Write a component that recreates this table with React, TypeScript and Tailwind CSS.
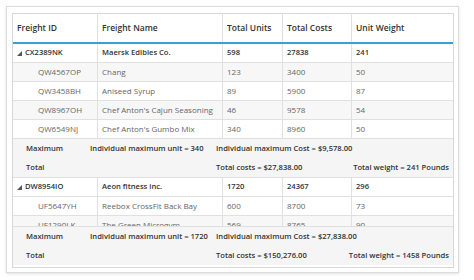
const cols = "grid grid-cols-[85px_125px_60px_69px_101px]";
const cell = "border-r border-[#e0e0e0] pl-[4px] flex items-center whitespace-nowrap overflow-hidden";
const lastCell = "pl-[4px] flex items-center whitespace-nowrap";

type Item = { id: string; name: string; units: number; costs: number; weight: number; alt?: boolean };

const groups = [
  {
    id: "CX2389NK",
    name: "Maersk Edibles Co.",
    units: 598,
    costs: 27838,
    weight: 241,
    items: [
      { id: "QW4567OP", name: "Chang", units: 123, costs: 3400, weight: 50, alt: true },
      { id: "QW3458BH", name: "Aniseed Syrup", units: 89, costs: 5900, weight: 87 },
      { id: "QW8967OH", name: "Chef Anton's Cajun Seasoning", units: 46, costs: 9578, weight: 54, alt: true },
      { id: "QW6549NJ", name: "Chef Anton's Gumbo Mix", units: 340, costs: 8960, weight: 50 },
    ] as Item[],
    summary: true,
  },
  {
    id: "DW8954IO",
    name: "Aeon fitness inc.",
    units: 1720,
    costs: 24367,
    weight: 296,
    items: [
      { id: "UF5647YH", name: "Reebox CrossFit Back Bay", units: 600, costs: 8700, weight: 73 },
      { id: "UF1290LK", name: "The Green Microgym", units: 569, costs: 8765, weight: 90, alt: true },
    ] as Item[],
    summary: false,
  },
];

function Triangle() {
  return (
    <svg width="5" height="5" viewBox="0 0 5 5" className="mr-[3px] shrink-0">
      <polygon points="5,0 5,5 0,5" fill="#555" />
    </svg>
  );
}

function SummaryRows({ max, maxCost, total, weight }: { max: string; maxCost: string; total: string; weight: string }) {
  return (
    <div className="bg-[#f5f5f5] text-[7.6px] font-semibold text-[#333] whitespace-nowrap">
      <div className="h-[19px] flex items-center">
        <span className="w-[77px] shrink-0 pl-[13px]">Maximum</span>
        <span className="w-[126px] shrink-0">{max}</span>
        <span>{maxCost}</span>
      </div>
      <div className="h-[19px] flex items-center">
        <span className="w-[203px] shrink-0 pl-[13px]">Total</span>
        <span className="flex-1">{total}</span>
        <span className="pr-[4px]">{weight}</span>
      </div>
    </div>
  );
}

export default function App() {
  return (
    <div className="w-[474px] h-[280px] bg-white pt-[6px] pl-[6px] font-['Open_Sans',sans-serif] text-[8px]">
      <div className="w-[453px] h-[267px] border border-[#dcdcdc] shadow-[0_1px_3px_rgba(0,0,0,0.12)] pt-[6px] pl-[5px]">
        <div className="w-[442px] h-[255px] border border-[#d8d8d8] flex flex-col">
          {/* header */}
          <div className={`${cols} h-[30px] text-[8.5px] font-semibold text-[#333] border-b-2 border-[#3c9fd1]`}>
            <div className={cell}>Freight ID</div>
            <div className={cell}>Freight Name</div>
            <div className={cell}>Total Units</div>
            <div className={cell}>Total Costs</div>
            <div className={lastCell}>Unit Weight</div>
          </div>

          {/* content */}
          <div className="h-[182px] overflow-hidden">
            {groups.map((g) => (
              <div key={g.id}>
                <div className={`${cols} h-[19px] border-b border-[#e0e0e0] text-[7.6px] font-semibold text-[#333]`}>
                  <div className={`${cell} pl-[3px]`}>
                    <Triangle />
                    {g.id}
                  </div>
                  <div className={cell}>{g.name}</div>
                  <div className={cell}>{g.units}</div>
                  <div className={cell}>{g.costs}</div>
                  <div className={lastCell}>{g.weight}</div>
                </div>
                {g.items.map((it) => (
                  <div
                    key={it.id}
                    className={`${cols} h-[19px] border-b border-[#e0e0e0] text-[#666] ${it.alt ? "bg-[#f7f7f7]" : "bg-white"}`}
                  >
                    <div className={`${cell} pl-[25px]`}>{it.id}</div>
                    <div className={cell}>{it.name}</div>
                    <div className={cell}>{it.units}</div>
                    <div className={cell}>{it.costs}</div>
                    <div className={lastCell}>{it.weight}</div>
                  </div>
                ))}
                {g.summary && (
                  <div className="border-b border-[#e0e0e0]">
                    <SummaryRows
                      max="Individual maximum unit = 340"
                      maxCost="Individual maximum Cost = $9,578.00"
                      total="Total costs = $27,838.00"
                      weight="Total weight = 241 Pounds"
                    />
                  </div>
                )}
              </div>
            ))}
          </div>

          {/* footer */}
          <div className="border-t border-[#e0e0e0]">
            <SummaryRows
              max="Individual maximum unit = 1720"
              maxCost="Individual maximum Cost = $27,838.00"
              total="Total costs = $150,276.00"
              weight="Total weight = 1458 Pounds"
            />
          </div>
        </div>
      </div>
    </div>
  );
}
